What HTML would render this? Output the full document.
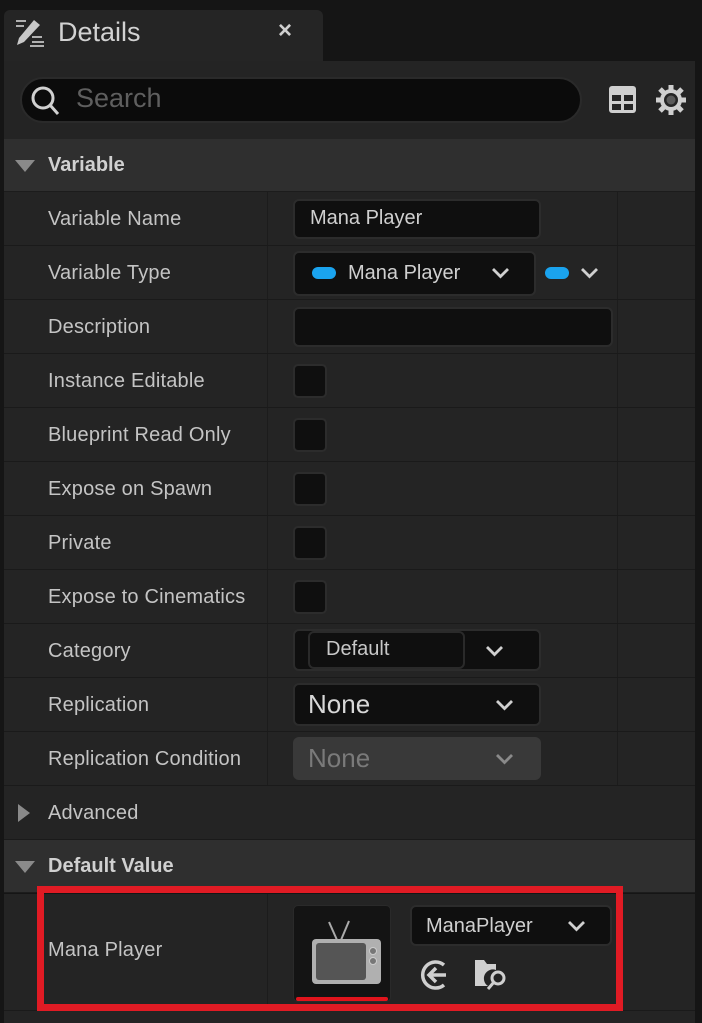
<!DOCTYPE html>
<html><head><style>
*{margin:0;padding:0;box-sizing:border-box}
body{width:702px;height:1023px;background:#151515;font-family:"Liberation Sans",sans-serif;color:#c8c8c8;position:relative;overflow:hidden}
.a{position:absolute}
.row{position:absolute;left:4px;width:691px;height:54px;background:#242424;border-bottom:1px solid #1a1a1a}
.lab{position:absolute;left:44px;top:16px;font-size:20px;color:#c4c4c4;letter-spacing:0.2px}
.vl{position:absolute;left:263px;top:0;width:1px;height:100%;background:#1c1c1c}
.vr{position:absolute;left:613px;top:0;width:1px;height:100%;background:#1c1c1c}
.box{position:absolute;background:#0f0f0f;border:2px solid #2c2c2c;border-radius:6px}
.cb{position:absolute;left:289px;top:10px;width:34px;height:34px;background:#0f0f0f;border:2px solid #2c2c2c;border-radius:5px}
.hdr{position:absolute;left:4px;width:691px;height:53px;background:#2f2f2f;border-bottom:1px solid #1c1c1c}
.hdr span{position:absolute;left:44px;top:15px;font-size:20px;font-weight:bold;color:#d0d0d0}
.tri{position:absolute;left:11px;top:21px;width:0;height:0;border-left:10px solid transparent;border-right:10px solid transparent;border-top:12px solid #8a8a8a}
.chev{position:absolute;width:19px;height:12px}
</style></head><body>
<div class="a" style="left:4px;top:10px;width:319px;height:51px;background:#252525;border-radius:6px 6px 0 0"></div>
<svg class="a" style="left:12px;top:18px" width="36" height="30" viewBox="0 0 36 30"><g stroke="#b0b0b0" stroke-width="2"><line x1="4" y1="3" x2="14" y2="3"/><line x1="4" y1="8" x2="12" y2="8"/><line x1="20" y1="24" x2="32" y2="24"/><line x1="20" y1="19" x2="30" y2="19"/><line x1="18" y1="28" x2="32" y2="28"/></g><path d="M22 2 L28 7 L12 24 L5 27 L7 20 Z" fill="#c8c8c8"/></svg>
<div class="a" style="left:58px;top:17px;font-size:27px;color:#d2d2d2">Details</div>
<div class="a" style="left:278px;top:17px;font-size:24px;font-weight:bold;color:#d0d0d0">×</div>
<div class="a" style="left:4px;top:61px;width:691px;height:78px;background:#242424"></div>
<div class="a" style="left:20px;top:77px;width:562px;height:46px;background:#0b0b0b;border:2px solid #2a2a2a;border-radius:23px"></div>
<svg class="a" style="left:28px;top:84px" width="34" height="34" viewBox="0 0 34 34"><circle cx="15" cy="14" r="10" fill="none" stroke="#d0d0d0" stroke-width="3"/><line x1="22" y1="21" x2="30" y2="30" stroke="#d0d0d0" stroke-width="3"/></svg>
<div class="a" style="left:76px;top:83px;font-size:27px;color:#5f5f5f">Search</div>
<svg class="a" style="left:608px;top:84px" width="30" height="32" viewBox="0 0 30 32"><rect x="1" y="2" width="27" height="27" rx="3" fill="#cfcfcf"/><g fill="#242424"><rect x="4" y="11" width="9" height="6"/><rect x="16" y="11" width="9" height="6"/><rect x="4" y="20" width="9" height="6"/><rect x="16" y="20" width="9" height="6"/></g></svg>
<svg class="a" style="left:654px;top:83px" width="34" height="34" viewBox="0 0 34 34"><g fill="#cfcfcf"><circle cx="17" cy="17" r="11"/><g stroke="#cfcfcf" stroke-width="5"><line x1="17" y1="2" x2="17" y2="32"/><line x1="2" y1="17" x2="32" y2="17"/><line x1="6" y1="6" x2="28" y2="28"/><line x1="28" y1="6" x2="6" y2="28"/></g></g><circle cx="17" cy="17" r="7" fill="#242424"/><circle cx="17" cy="17" r="4.5" fill="#5a5a5a"/></svg>
<div class="hdr" style="top:139px"><div class="tri"></div><span>Variable</span></div>
<div class="row" style="top:192px"><div class="vl"></div><div class="vr"></div><div class="lab">Variable Name</div>
<div class="box" style="left:289px;top:7px;width:248px;height:40px"></div><div class="a" style="left:306px;top:15px;font-size:20px;color:#d0d0d0">Mana Player</div></div>
<div class="row" style="top:246px"><div class="vl"></div><div class="vr"></div><div class="lab">Variable Type</div>
<div class="box" style="left:289px;top:5px;width:243px;height:45px"></div>
<div class="a" style="left:308px;top:21px;width:24px;height:12px;border-radius:6px;background:#1aa3ee"></div>
<div class="a" style="left:344px;top:16px;font-size:20px;color:#d0d0d0">Mana Player</div>
<svg class="chev" style="left:487px;top:21px" viewBox="0 0 19 12"><path d="M2 2 L9.5 9.5 L17 2" fill="none" stroke="#d0d0d0" stroke-width="2.8"/></svg>
<div class="a" style="left:541px;top:21px;width:24px;height:12px;border-radius:6px;background:#1aa3ee"></div>
<svg class="chev" style="left:576px;top:21px" viewBox="0 0 19 12"><path d="M2 2 L9.5 9.5 L17 2" fill="none" stroke="#d0d0d0" stroke-width="2.8"/></svg></div>
<div class="row" style="top:300px"><div class="vl"></div><div class="vr"></div><div class="lab">Description</div>
<div class="box" style="left:289px;top:7px;width:320px;height:40px"></div></div>
<div class="row" style="top:354px"><div class="vl"></div><div class="vr"></div><div class="lab">Instance Editable</div><div class="cb"></div></div>
<div class="row" style="top:408px"><div class="vl"></div><div class="vr"></div><div class="lab">Blueprint Read Only</div><div class="cb"></div></div>
<div class="row" style="top:462px"><div class="vl"></div><div class="vr"></div><div class="lab">Expose on Spawn</div><div class="cb"></div></div>
<div class="row" style="top:516px"><div class="vl"></div><div class="vr"></div><div class="lab">Private</div><div class="cb"></div></div>
<div class="row" style="top:570px"><div class="vl"></div><div class="vr"></div><div class="lab">Expose to Cinematics</div><div class="cb"></div></div>
<div class="row" style="top:624px"><div class="vl"></div><div class="vr"></div><div class="lab">Category</div>
<div class="box" style="left:289px;top:5px;width:248px;height:42px"></div>
<div class="box" style="left:304px;top:7px;width:157px;height:38px;border-color:#2a2a2a"></div>
<div class="a" style="left:322px;top:14px;font-size:20px;color:#c8c8c8">Default</div>
<svg class="chev" style="left:481px;top:21px" viewBox="0 0 19 12"><path d="M2 2 L9.5 9.5 L17 2" fill="none" stroke="#d0d0d0" stroke-width="2.8"/></svg></div>
<div class="row" style="top:678px"><div class="vl"></div><div class="vr"></div><div class="lab">Replication</div>
<div class="box" style="left:289px;top:5px;width:248px;height:43px"></div>
<div class="a" style="left:304px;top:11px;font-size:26px;color:#d8d8d8">None</div>
<svg class="chev" style="left:491px;top:21px" viewBox="0 0 19 12"><path d="M2 2 L9.5 9.5 L17 2" fill="none" stroke="#d0d0d0" stroke-width="2.8"/></svg></div>
<div class="row" style="top:732px"><div class="vl"></div><div class="vr"></div><div class="lab">Replication Condition</div>
<div class="a" style="left:289px;top:5px;width:248px;height:43px;background:#393939;border-radius:6px"></div>
<div class="a" style="left:304px;top:11px;font-size:26px;color:#7a7a7a">None</div>
<svg class="chev" style="left:491px;top:21px" viewBox="0 0 19 12"><path d="M2 2 L9.5 9.5 L17 2" fill="none" stroke="#8a8a8a" stroke-width="2.8"/></svg></div>
<div class="row" style="top:786px"><div class="a" style="left:14px;top:18px;width:0;height:0;border-top:9px solid transparent;border-bottom:9px solid transparent;border-left:12px solid #8a8a8a"></div><div class="lab">Advanced</div></div>
<div class="hdr" style="top:840px"><div class="tri"></div><span>Default Value</span></div>
<div class="row" style="top:894px;height:117px"><div class="vl"></div><div class="vr"></div>
<div class="lab" style="top:45px">Mana Player</div>
<div class="a" style="left:289px;top:11px;width:98px;height:97px;background:#141414;border-radius:5px;border:1px solid #2a2a2a"></div>
<div class="a" style="left:292px;top:103px;width:92px;height:4px;background:#e0141c;border-radius:2px"></div>
<svg class="a" style="left:302px;top:22px" width="76" height="70" viewBox="0 0 76 70"><g stroke="#aaa" stroke-width="2"><line x1="31" y1="24" x2="23" y2="6"/><line x1="35" y1="24" x2="43" y2="5"/></g><rect x="6" y="23" width="69" height="45" rx="4" fill="#b0b0b0"/><rect x="10" y="27" width="50" height="37" rx="3" fill="#555"/><circle cx="67" cy="35" r="3.5" fill="#777" stroke="#ccc"/><circle cx="67" cy="45" r="3.5" fill="#777" stroke="#ccc"/></svg>
<div class="box" style="left:406px;top:11px;width:202px;height:41px"></div>
<div class="a" style="left:422px;top:21px;font-size:20px;color:#d0d0d0">ManaPlayer</div>
<svg class="chev" style="left:563px;top:26px" viewBox="0 0 19 12"><path d="M2 2 L9.5 9.5 L17 2" fill="none" stroke="#d0d0d0" stroke-width="2.8"/></svg>
<svg class="a" style="left:414px;top:64px" width="34" height="34" viewBox="0 0 34 34"><path d="M26 7 A13 13 0 1 0 26 27" fill="none" stroke="#cfcfcf" stroke-width="3.5"/><path d="M28 17 H12 M18 10 L11 17 L18 24" fill="none" stroke="#cfcfcf" stroke-width="3.5"/></svg>
<svg class="a" style="left:468px;top:62px" width="40" height="36" viewBox="0 0 40 36"><path d="M3 4 H12 L15 8 H24 V14 A9 9 0 0 0 16 30 H3 Z" fill="#cfcfcf"/><circle cx="26" cy="22" r="6" fill="none" stroke="#cfcfcf" stroke-width="3"/><line x1="22" y1="26" x2="16" y2="33" stroke="#cfcfcf" stroke-width="3"/></svg>
</div>
<div class="a" style="left:4px;top:1011px;width:691px;height:12px;background:#242424"></div>
<div class="a" style="left:37px;top:886px;width:586px;height:125px;border:7px solid #e01b24"></div>
</body></html>
